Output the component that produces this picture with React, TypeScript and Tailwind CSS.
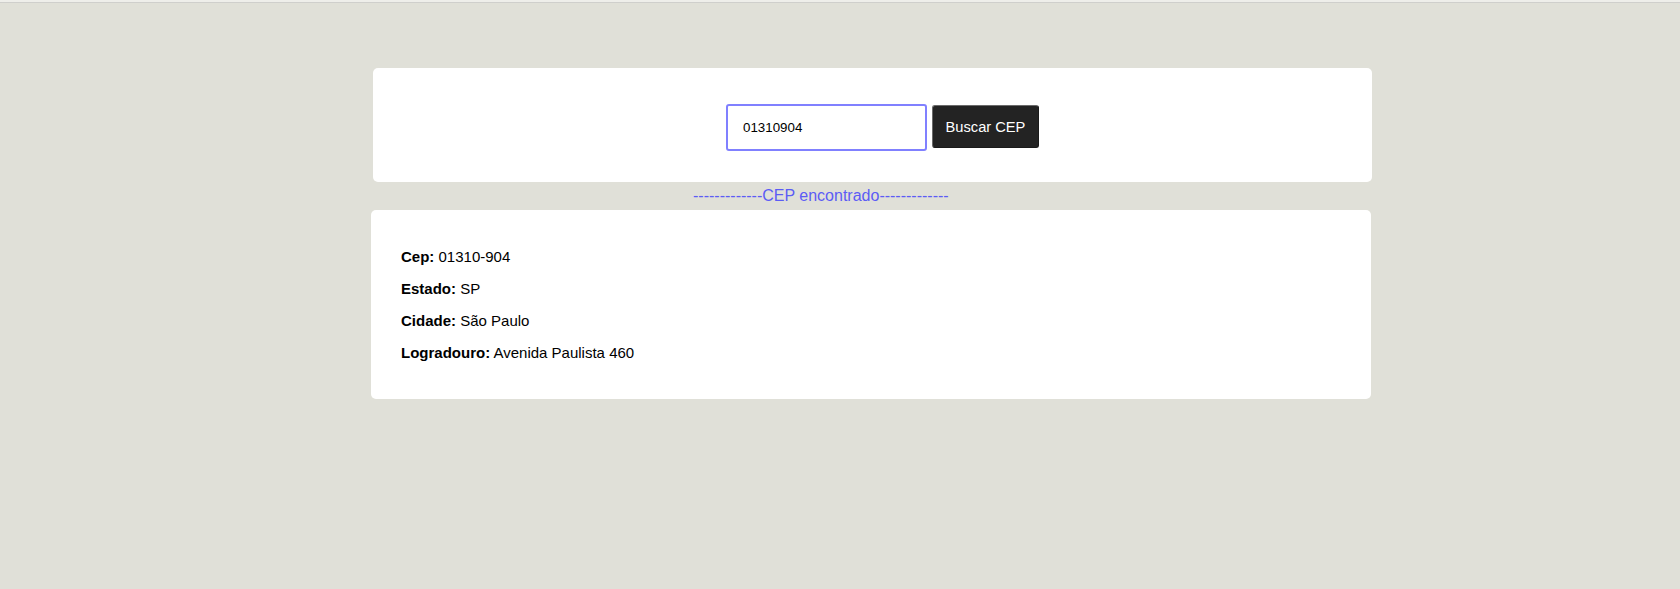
import React from "react";

export default function App() {
  return (
    <div
      className="min-h-screen bg-[#e0e0d8] text-black"
      style={{ fontFamily: '"Liberation Sans", Arial, sans-serif' }}
    >
      <div className="h-[2px] bg-[#eeeeea]" />
      <div className="h-[1px] bg-[#cfcfcc]" />
      <div className="pt-[65px]">
        <div className="ml-[373px] w-[999px] h-[114px] bg-white rounded-[5px] pl-[353px] pt-[36px] flex items-start gap-[5px]">
          <input
            readOnly
            value="01310904"
            className="w-[201px] h-[47px] border-2 border-[#8080ff] rounded-[3px] pl-[15px] text-[13.33px] text-black outline-none bg-white"
            style={{ fontFamily: '"Liberation Sans", Arial, sans-serif' }}
          />
          <button className="mt-[1px] w-[107px] h-[43px] bg-[#232323] text-white text-[14.67px] rounded-[3px] border border-t-[#6a6a6a] border-l-[#6a6a6a] border-r-[#1a1a1a] border-b-[#1a1a1a]">
            Buscar CEP
          </button>
        </div>
        <div className="h-[28px] flex items-center pl-[693px] text-[16px] text-[#5c5cf5] leading-[18px]">
          -------------CEP encontrado-------------
        </div>
        <div className="ml-[371px] w-[1000px] h-[189px] bg-white rounded-[5px] pl-[30px] pt-[38px] flex flex-col gap-[15px] text-[15px] leading-[17px]">
          <p>
            <strong>Cep:</strong> 01310-904
          </p>
          <p>
            <strong>Estado:</strong> SP
          </p>
          <p>
            <strong>Cidade:</strong> São Paulo
          </p>
          <p>
            <strong>Logradouro:</strong> Avenida Paulista 460
          </p>
        </div>
      </div>
    </div>
  );
}
